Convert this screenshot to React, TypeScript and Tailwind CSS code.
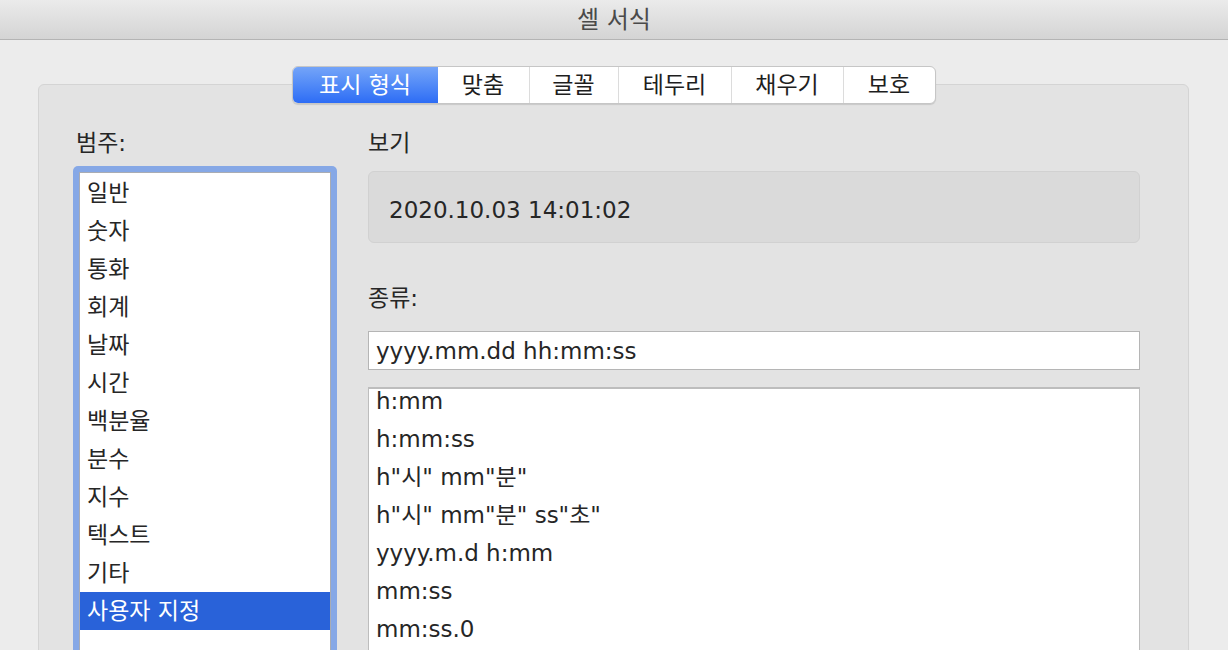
import React from "react";

const FONT = { fontFamily: '"DejaVu Sans", "Noto Sans CJK KR", sans-serif' };

const TABS = [
  { label: "표시 형식", w: "w-[145px]", active: true },
  { label: "맞춤", w: "w-[91px]" },
  { label: "글꼴", w: "w-[89px]" },
  { label: "테두리", w: "w-[113px]" },
  { label: "채우기", w: "w-[112px]" },
  { label: "보호", w: "w-[92px]" },
];

const CATEGORIES = [
  "일반",
  "숫자",
  "통화",
  "회계",
  "날짜",
  "시간",
  "백분율",
  "분수",
  "지수",
  "텍스트",
  "기타",
  "사용자 지정",
];

const FORMATS = [
  "h:mm",
  "h:mm:ss",
  'h"시" mm"분"',
  'h"시" mm"분" ss"초"',
  "yyyy.m.d h:mm",
  "mm:ss",
  "mm:ss.0",
];

export default function App() {
  return (
    <div
      className="flex h-[650px] w-full flex-col overflow-hidden bg-[#ececec] text-[23px] text-[#262626]"
      style={FONT}
    >
      {/* Title bar */}
      <div className="flex h-[40px] shrink-0 items-center justify-center border-b border-[#b4b4b4] bg-gradient-to-b from-[#ebebeb] to-[#d4d4d4]">
        <span className="text-[24px] text-[#4a4a4a]">셀 서식</span>
      </div>

      <div className="flex flex-col pl-[38px] pr-[39px]">
        {/* Tabs */}
        <div className="relative z-10 mt-[26px] flex justify-center">
          <div className="flex h-[38px] overflow-hidden rounded-[6px] border border-[#c6c6c6] bg-white shadow-[0_1px_1px_rgba(0,0,0,0.12)]">
            {TABS.map((t, i) => (
              <div
                key={t.label}
                className={
                  t.active
                    ? `${t.w} flex items-center justify-center bg-gradient-to-b from-[#74a4f8] to-[#2d6cf5] text-white`
                    : `${t.w} flex items-center justify-center text-[#1e1e1e] ${
                        i > 1 ? "border-l border-[#dcdcdc]" : ""
                      }`
                }
              >
                {t.label}
              </div>
            ))}
          </div>
        </div>

        {/* Group box */}
        <div className="-mt-[20px] flex h-[600px] rounded-[6px] border border-[#d4d4d4] bg-[#e3e3e3] pl-[34px] pt-[44px]">
          {/* Category column */}
          <div className="flex w-[264px] flex-col">
            <div className="pl-[3px] leading-[28px]">범주:</div>
            <div className="mt-[9px] rounded-[5px] bg-[#86a8e6] p-[6px]">
              <div className="h-[520px] border border-[#a9acb3] bg-white pt-px">
                {CATEGORIES.map((c) => (
                  <div
                    key={c}
                    className={`flex h-[38px] items-center pl-[7px] ${
                      c === "사용자 지정" ? "bg-[#2962d9] text-white" : ""
                    }`}
                  >
                    {c}
                  </div>
                ))}
              </div>
            </div>
          </div>

          {/* Right column */}
          <div className="ml-[31px] flex w-[772px] flex-col">
            <div className="leading-[28px]">보기</div>
            <div className="mt-[14px] flex h-[73px] items-center rounded-[6px] border border-[#d1d1d1] bg-[#dadada] pl-[20px] pt-[6px]">
              2020.10.03 14:01:02
            </div>

            <div className="mt-[41px] leading-[28px]">종류:</div>
            <div className="mt-[19px] flex h-[40px] items-center border border-[#b5b5b5] bg-white pl-[7px] pt-[2px]">
              yyyy.mm.dd hh:mm:ss
            </div>

            <div className="mt-[17px] h-[300px] overflow-hidden border border-[#bdbdbd] border-t-2 bg-white">
              <div className="-mt-[7px]">
                {FORMATS.map((f) => (
                  <div key={f} className="flex h-[38px] items-center pl-[7px]">
                    {f}
                  </div>
                ))}
              </div>
            </div>
          </div>
        </div>
      </div>
    </div>
  );
}
